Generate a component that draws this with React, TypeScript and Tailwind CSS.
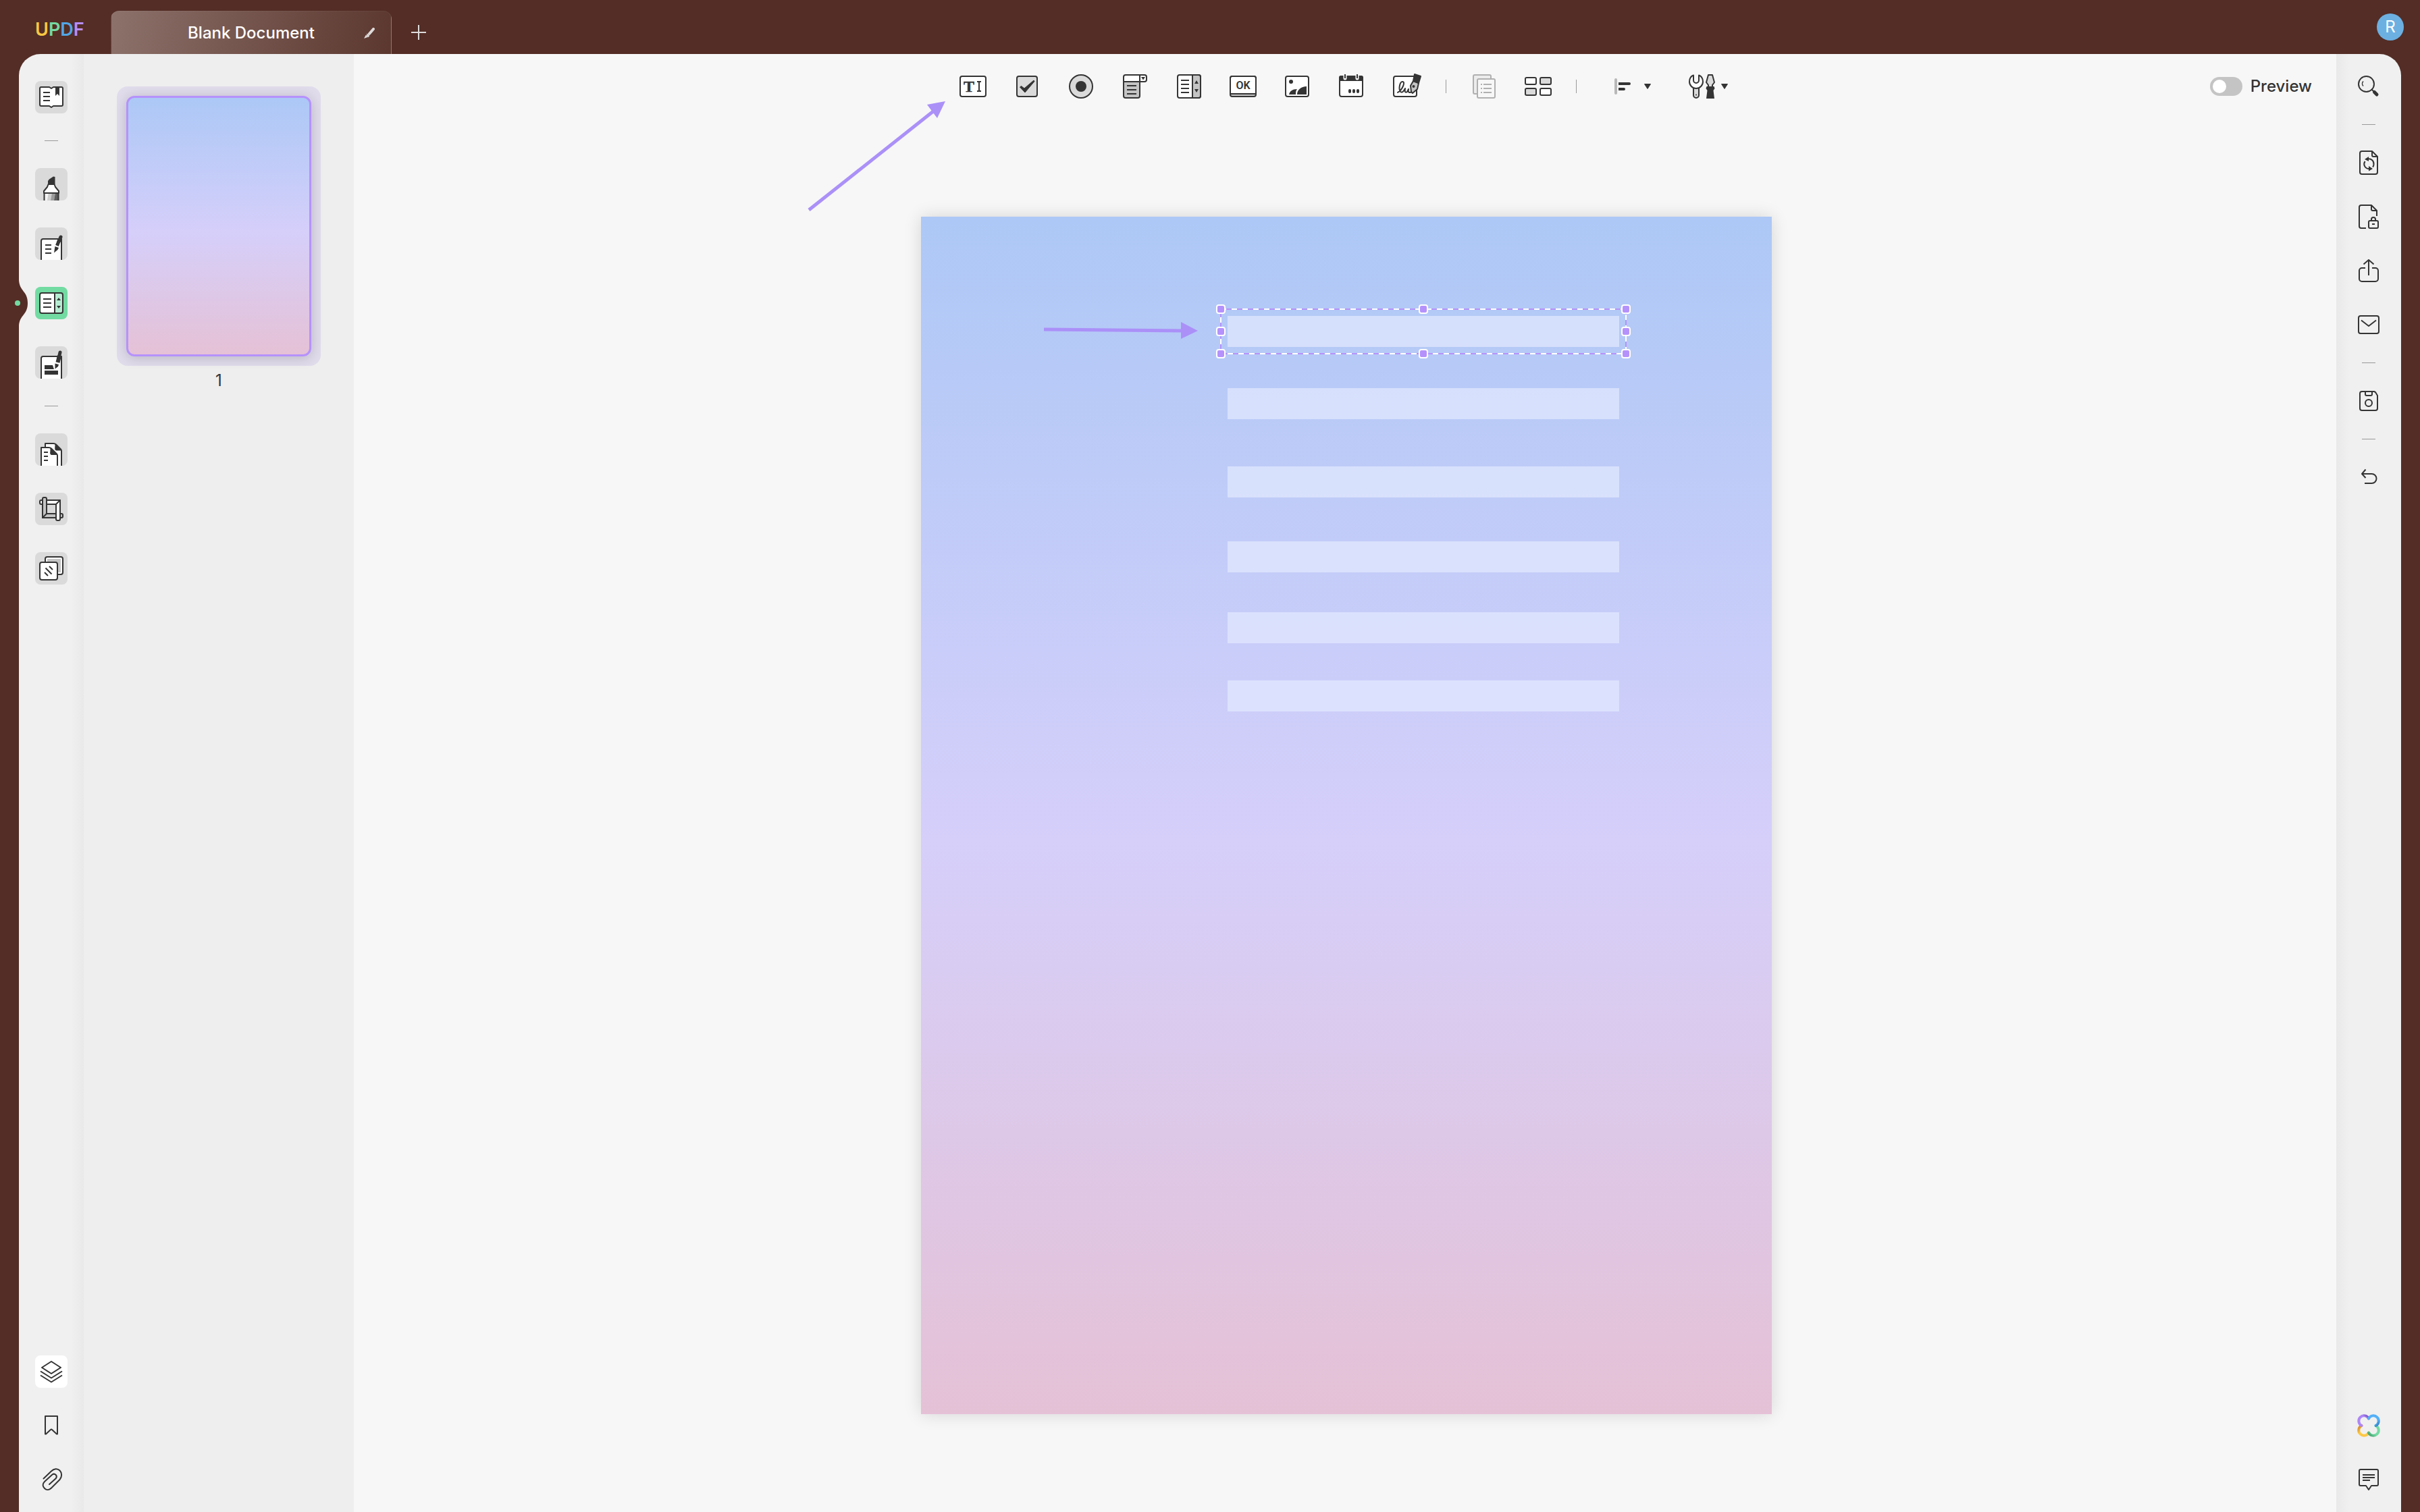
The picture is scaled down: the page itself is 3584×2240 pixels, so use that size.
import { useState, type ReactNode } from 'react'

const INK = '#343434'

function Icon({ children, className = 'size-12' }: { children: ReactNode; className?: string }) {
  return (
    <svg
      viewBox={className === 'size-12' ? '0 0 48 48' : '0 0 40 48'}
      className={className}
      fill="none"
      stroke={INK}
      strokeWidth="2"
      strokeLinejoin="round"
      aria-hidden="true"
    >
      {children}
    </svg>
  )
}

/* ---------- left rail ---------- */

const ReaderIcon = () => (
  <Icon>
    <path fill="#fff" d="M9 9H21l3 2 3-2H39a2 2 0 0 1 2 2V35a2 2 0 0 1-2 2H27l-3 2-3-2H9a2 2 0 0 1-2-2V11a2 2 0 0 1 2-2z" />
    <path fill={INK} stroke="none" d="M30 8h6v14l-3-3-3 3z" />
    <path d="M12 17h10M12 23h10M12 29h10" />
  </Icon>
)

const MarkerIcon = () => (
  <Icon>
    <path fill="#fff" d="M19.500 24h9l1.500 4 5 6v3H13v-3l5-6z" />
    <path fill={INK} stroke="none" d="M19 24v-5l2-2.500 6-4 2.500.500V24z" />
    <path fill="#f3f3f3" stroke="none" d="M13 37h7l-2 11h-5z" />
    <path fill="#cfcfcf" stroke="none" d="M20 37h5l-2 11h-5z" />
    <path fill="#9c9c9c" stroke="none" d="M25 37h5l-2 11h-5z" />
    <path fill="#5e5e5e" stroke="none" d="M30 37h5v11h-7z" />
    <path d="M13.500 48V37h21v11" />
  </Icon>
)

const EditIcon = () => (
  <Icon>
    <path fill="#fff" d="M9 48V20a3 3 0 0 1 3-3h27v31" />
    <path d="M15 26h9M15 32h9M15 38h9" />
    <path strokeWidth="5" strokeLinecap="round" d="M38 14l-3 7" />
    <path strokeWidth="5" d="M36 18l-3.500 9" />
    <path fill={INK} stroke="none" d="M29.500 28l5.500 2-1.500 3-5.500 4.500z" />
  </Icon>
)

const FormIcon = () => (
  <Icon>
    <rect x="7" y="9" width="34" height="30" rx="3" fill="#fff" stroke="none" />
    <path fill="#b5ecd1" stroke="none" d="M29 9h9a3 3 0 0 1 3 3v24a3 3 0 0 1-3 3h-9z" />
    <rect x="7" y="9" width="34" height="30" rx="3" />
    <path d="M29 9v30M12 18h12M12 24h12M12 30h12" />
    <path fill={INK} stroke="none" d="M32 20l3-4 3 4zM32 28l3 4 3-4z" />
  </Icon>
)

const RedactIcon = () => (
  <Icon>
    <path fill="#fff" d="M9 48V18a3 3 0 0 1 3-3h27v33" />
    <path fill={INK} stroke="none" d="M14 28h12l2 6H14zM14 36h20v6H14z" />
    <path strokeWidth="5" strokeLinecap="round" d="M37 9l-2 9" />
    <path strokeWidth="6" d="M36 14l-2.500 10" />
    <path fill={INK} stroke="none" d="M29.500 25.500l5.500 1.500-1 3-4.500 3.500z" />
  </Icon>
)

const OrganizeIcon = () => (
  <Icon>
    <path fill="#fff" stroke="none" d="M15 22v-7h14l10 11v22H15z" />
    <path d="M15 20v-5h12c2 0 3 .500 4 1.500l7 7c.700.700 1 1.500 1 2.500v22" />
    <path fill={INK} strokeWidth="1" d="M30 16.500c0 5-1 8 1 8.500h7.500z" />
    <path fill="#fff" stroke="none" d="M9 48V21h13l11 11v16z" />
    <path d="M9 48V21h11c2 0 3 .500 4 1.500l8 8c.700.700 1 1.500 1 2.500v15" />
    <path fill={INK} strokeWidth="1" d="M23 22.500c0 6-1 8.500 1 9h8z" />
    <path d="M13 28h6M13 34h6M13 40h6" />
  </Icon>
)

const CropIcon = () => (
  <Icon>
    <path fill="#c4c4c4" d="M11 37V31h28a2 2 0 0 1 2 2v2a2 2 0 0 1-2 2z" />
    <path fill="#fff" d="M37 11v6H9a2 2 0 0 1-2-2v-2a2 2 0 0 1 2-2z" />
    <path fill="#c4c4c4" d="M11 37V9a2 2 0 0 1 2-2h2a2 2 0 0 1 2 2v22z" />
    <path fill="#fff" d="M37 11v28a2 2 0 0 1-2 2h-2a2 2 0 0 1-2-2V17z" />
  </Icon>
)

const WatermarkIcon = () => (
  <Icon>
    <rect x="15" y="7" width="26" height="26" rx="3" fill="#fff" />
    <rect x="18" y="10" width="20" height="20" fill="#c4c4c4" stroke="none" />
    <rect x="7" y="15" width="26" height="26" rx="3" fill="#fff" />
    <path d="M15.500 23.500l9 9M21 21l5 5M14 30l5 5" />
  </Icon>
)

const ThumbnailsIcon = () => (
  <Icon>
    <path d="M24 9l14 9-14 9-14-9z" />
    <path d="M8 23.500l16 10 16-10M8 29.500l16 10 16-10" />
  </Icon>
)

const BookmarkIcon = () => (
  <Icon>
    <path d="M15 10h18v26.500h-1L25 30q-1-1-2 0l-7 6.500h-1z" />
  </Icon>
)

const AttachmentIcon = () => (
  <Icon>
    <path
      strokeLinecap="round"
      d="M12.500 22.500L24 11.500C28 7.500 33 7 36.500 10.500S40 20 36.500 24L24 36.500C21 39.500 17 40 14 37S10.500 30.500 14 27L25.500 16.500C29 14 33.500 18 31 22L21 31"
    />
  </Icon>
)

/* ---------- form toolbar ---------- */

const TextFieldIcon = () => (
  <Icon>
    <rect x="5" y="9" width="38" height="30" rx="3" fill="#fff" />
    <text x="10" y="32" fontFamily="Liberation Serif, serif" fontWeight="700" fontSize="24" fill={INK} stroke={INK} strokeWidth="0.5">
      T
    </text>
    <path d="M30 17h6M30 31h6M33 17v14" />
  </Icon>
)

const CheckBoxIcon = () => (
  <Icon>
    <rect x="9" y="9" width="30" height="30" rx="3" fill="#dadada" />
    <path fill={INK} strokeWidth="1" d="M13.500 25l2-1.500 4.500 3.500 14-12 1 1.500L21 33z" />
  </Icon>
)

const RadioIcon = () => (
  <Icon>
    <circle cx="24" cy="24" r="17" fill="#dadada" />
    <circle cx="24" cy="24" r="8" fill={INK} stroke="none" />
  </Icon>
)

const DropdownIcon = () => (
  <Icon>
    <path fill="#c4c4c4" d="M7 17v21a3 3 0 0 0 3 3h18a3 3 0 0 0 3-3V17z" />
    <path fill="#fff" d="M10 7h28a3 3 0 0 1 3 3v4a3 3 0 0 1-3 3H7v-7a3 3 0 0 1 3-3z" />
    <path d="M31 7v10M12 23h14M12 29h14M12 35h14" />
    <path fill={INK} stroke="none" d="M33 10h6l-3 4.500z" />
  </Icon>
)

const ListBoxIcon = () => (
  <Icon>
    <rect x="7" y="7" width="34" height="34" rx="3" fill="#fff" />
    <path fill="#c4c4c4" d="M29 7h9a3 3 0 0 1 3 3v28a3 3 0 0 1-3 3h-9z" />
    <path d="M12 15h12M12 21h12M12 27h12M12 33h12" />
    <path fill={INK} stroke="none" d="M32 20l3-5 3 5zM32 28l3 5 3-5z" />
  </Icon>
)

const ButtonIcon = () => (
  <Icon>
    <rect x="5" y="9" width="38" height="30" rx="3" fill="#c4c4c4" />
    <path fill="#fff" d="M8 9h32a3 3 0 0 1 3 3v23H5V12a3 3 0 0 1 3-3z" />
    <text x="24" y="28" textAnchor="middle" fontFamily="Roboto, sans-serif" fontWeight="600" fontSize="16" fill={INK} stroke="none">
      OK
    </text>
  </Icon>
)

const ImageIcon = () => (
  <Icon>
    <rect x="7" y="9" width="34" height="30" rx="3" fill="#fff" />
    <circle cx="15" cy="17" r="3" fill={INK} stroke="none" />
    <path fill={INK} stroke="none" d="M12 36c1-5 5-8 12-8-2 2-2 5-2 8zM24 36c0-7 6-12 14-12v12z" />
  </Icon>
)

const DateIcon = () => (
  <Icon>
    <rect x="7" y="9" width="34" height="30" rx="3" fill="#fff" />
    <path fill={INK} stroke="none" d="M6 16v-5a3 3 0 0 1 3-3h30a3 3 0 0 1 3 3v5z" />
    <path stroke="#f7f7f7" strokeWidth="5" strokeLinecap="round" d="M15 6v6M33 6v6" />
    <path strokeWidth="2" d="M15 6v6M33 6v6" />
    <path strokeWidth="4" strokeLinecap="round" d="M22 30v2M28 30v2M34 30v2" />
  </Icon>
)

const SignatureIcon = () => (
  <Icon>
    <rect x="7" y="9" width="34" height="30" rx="3" fill="#fff" />
    <path strokeLinecap="round" d="M13 33C20 29 25 17 20 17c-4 0-6 11-3 15 3 2 5-1 7-5-1 5 0 7 3 5l2-4c-1 5 1 6 5 4" />
    <path fill="#c4c4c4" d="M36 16l8 3-2 9-7 6-2-2-1-9z" />
    <path fill={INK} d="M38 6l9 3-3 10-8-3z" />
    <circle cx="36.500" cy="24" r="2" fill={INK} stroke="none" />
  </Icon>
)

const CopyPagesIcon = () => (
  <Icon>
    <g stroke="#b0b0b0">
      <rect x="4" y="7" width="26" height="28" rx="2" fill="#ececec" />
      <rect x="10" y="13" width="26" height="28" rx="2" fill="#f7f7f7" />
      <path d="M15 21h2M19 21h12M15 27h2M19 27h12M15 33h2M19 33h12" />
    </g>
  </Icon>
)

const FieldGridIcon = () => (
  <Icon>
    <rect x="1" y="11" width="16" height="10" rx="2" fill="#fff" />
    <rect x="23" y="11" width="16" height="10" rx="2" fill="#dadada" />
    <rect x="1" y="27" width="16" height="10" rx="2" fill="#dadada" />
    <rect x="23" y="27" width="16" height="10" rx="2" fill="#fff" />
  </Icon>
)

const AlignIcon = () => (
  <Icon className="h-12 w-10">
    <path stroke="#b8b8b8" strokeWidth="4" strokeLinecap="round" d="M6 14v20" />
    <path strokeWidth="4" d="M10 20h16M10 28h8" />
    <path strokeWidth="4" strokeLinecap="round" d="M16 20h10M14 28h4" />
  </Icon>
)

const ToolsIcon = () => (
  <Icon className="h-12 w-10">
    <path fill="#dadada" d="M7 26v11a4 4 0 0 0 8 0V26z" />
    <circle cx="11" cy="36.500" r="1" fill={INK} stroke="none" />
    <path fill="#fff" d="M7 7.500C3 9 1 13 1 17a10 10 0 0 0 20 0c0-4-2-8-6-9.500V15a4 4 0 0 1-8 0z" />
    <path fill="#dadada" d="M29 7h6l3 11-3 4v6h-6v-6l-3-4z" />
    <path fill={INK} stroke="none" d="M26.500 24h11l1 3-2 3 1.500 12H26l1.500-12-2-3z" />
    <path fill="#dadada" stroke="none" d="M30 20h4v4h-4z" />
  </Icon>
)

const Caret = () => (
  <svg viewBox="0 0 12 12" className="size-3" aria-hidden="true">
    <path fill={INK} stroke={INK} strokeLinejoin="round" d="M0.500 2.500h9l-4.500 7z" />
  </svg>
)

/* ---------- right rail ---------- */

const SearchIcon = () => (
  <Icon>
    <circle cx="20.500" cy="20.500" r="11.500" />
    <path strokeWidth="1.500" d="M16 16.500c-2 2-2 5 0 7" />
    <path d="M28 28l4 4" />
    <path strokeWidth="5" strokeLinecap="round" d="M32.500 32.500l3.500 3.500" />
  </Icon>
)

const ConvertIcon = () => (
  <Icon>
    <path d="M14 7h15l8 8v23a3 3 0 0 1-3 3H14a3 3 0 0 1-3-3V10a3 3 0 0 1 3-3z" />
    <path d="M29 7v6a2 2 0 0 0 2 2h6" />
    <path d="M22 18.500c6-1 10 3 9.500 8 0 2-.5 3-1.500 4M18.500 22c-3 5 0 11 6 11" />
    <path fill={INK} stroke="none" d="M18 19l6-4v7zM30 33l-6-4v7.500z" />
  </Icon>
)

const ProtectIcon = () => (
  <Icon>
    <path d="M20 41h-7a3 3 0 0 1-3-3V10a3 3 0 0 1 3-3h15l8 8v8" />
    <path d="M28 7v6a2 2 0 0 0 2 2h6" />
    <rect x="24" y="30" width="14" height="11" rx="2" />
    <path d="M28 30v-2a3 3 0 0 1 6 0v2M29 35h4" />
  </Icon>
)

const ShareIcon = () => (
  <Icon>
    <path d="M19 20h-5a4 4 0 0 0-4 4v12a4 4 0 0 0 4 4h20a4 4 0 0 0 4-4V24a4 4 0 0 0-4-4h-5M24 8v23M16.500 14.500L24 8l7.500 6.500" />
  </Icon>
)

const MailIcon = () => (
  <Icon>
    <rect x="9" y="11" width="30" height="26" rx="3" />
    <path d="M13 17.500l11 8.500 11-8.500" />
  </Icon>
)

const SaveIcon = () => (
  <Icon>
    <path d="M14 10h18l2 1 3 5v19a3 3 0 0 1-3 3H14a3 3 0 0 1-3-3V13a3 3 0 0 1 3-3z" />
    <path d="M19 10v4a2 2 0 0 0 2 2h6a2 2 0 0 0 2-2v-4" />
    <circle cx="24" cy="27" r="5" />
  </Icon>
)

const UndoIcon = () => (
  <Icon>
    <path d="M19.500 12.500L14 19l5.500 6M14 19h14.500a7 7 0 0 1 0 14H18" />
  </Icon>
)

const AssistantIcon = () => (
  <Icon>
    <defs>
      <linearGradient id="petalPurple" x1="0" y1="1" x2="1" y2="0">
        <stop offset="0.700" stopColor="#ae86f6" />
        <stop offset="1" stopColor="#6f4bb8" />
      </linearGradient>
      <linearGradient id="petalBlue" x1="0" y1="0" x2="1" y2="1">
        <stop offset="0.700" stopColor="#54b0f8" />
        <stop offset="1" stopColor="#2b7cc4" />
      </linearGradient>
      <linearGradient id="petalGreen" x1="1" y1="0" x2="0" y2="1">
        <stop offset="0.600" stopColor="#72dba2" />
        <stop offset="1" stopColor="#3f9b6b" />
      </linearGradient>
      <linearGradient id="petalYellow" x1="1" y1="1" x2="0" y2="0">
        <stop offset="0.600" stopColor="#fcc844" />
        <stop offset="1" stopColor="#cf8226" />
      </linearGradient>
    </defs>
    <g strokeWidth="4" strokeLinecap="round">
      <path stroke="url(#petalYellow)" d="M24 34.500A7.800 7.800 0 1 1 13.500 24" />
      <path stroke="url(#petalGreen)" d="M34.500 24A7.800 7.800 0 1 1 24 34.500" />
      <path stroke="url(#petalPurple)" d="M13.500 24A7.800 7.800 0 1 1 24 13.500" />
      <path stroke="url(#petalBlue)" d="M24 13.500A7.800 7.800 0 1 1 34.500 24" />
    </g>
  </Icon>
)

const CommentIcon = () => (
  <Icon>
    <path d="M12 9h24a2 2 0 0 1 2 2v20a2 2 0 0 1-2 2h-8l-4 6-4-6h-8a2 2 0 0 1-2-2V11a2 2 0 0 1 2-2z" />
    <path d="M15 17h18M15 21h18M15 25h11" />
  </Icon>
)

/* ---------- layout ---------- */

function IconButton({ label, className = '', children }: { label: string; className?: string; children: ReactNode }) {
  return (
    <button type="button" aria-label={label} className={`relative size-12 shrink-0 rounded-lg ${className}`}>
      {children}
    </button>
  )
}

const Dash = () => <span className="h-px w-5 shrink-0 bg-[#999]" />

function TitleBar() {
  return (
    <header className="flex h-20 shrink-0 items-end pr-6">
      <div className="flex h-20 w-[164px] shrink-0 items-center pt-2 pl-[52px] text-[27px] leading-8 font-semibold">
        <span className="text-[#f7c843]">U</span>
        <span className="text-[#74d9a2]">P</span>
        <span className="text-[#52a6e4]">D</span>
        <span className="text-[#b78dfa]">F</span>
      </div>
      <div className="grid h-16 w-[416px] grid-cols-[64px_1fr_64px] items-center rounded-t-xl border border-b-0 border-white/5 bg-linear-100 from-[#8c726b] to-[#5b372f] text-white">
        <span />
        <span className="text-center text-2xl font-medium whitespace-nowrap">Blank Document</span>
        <button type="button" aria-label="Rename" className="justify-self-center">
          <svg viewBox="0 0 16 16" className="size-4" fill="#dedbda" aria-hidden="true">
            <path stroke="#dedbda" strokeWidth="4" strokeLinecap="round" d="M14 2L8 9" />
            <path d="M4.500 8.500l4 3.500-2.500 2.500-2-3zM3 10.500l2.500 3.500L0 16z" />
          </svg>
        </button>
      </div>
      <button type="button" aria-label="New tab" className="flex h-16 w-20 items-center justify-center">
        <svg viewBox="0 0 22 22" className="size-[22px]" stroke="#dedbda" strokeWidth="2" aria-hidden="true">
          <path d="M0 11h22M11 0v22" />
        </svg>
      </button>
      <button type="button" className="mb-5 ml-auto size-10 rounded-full bg-[#6cb0e1] text-2xl text-white">
        R
      </button>
    </header>
  )
}

function LeftRail() {
  return (
    <nav className="flex w-24 shrink-0 flex-col items-center gap-10 rounded-tl-[32px] bg-linear-to-r from-[#f0f0f0] from-80% to-[#e9e9e9] pt-10 pb-6">
      <IconButton label="Reader" className="bg-[#dadada]"><ReaderIcon /></IconButton>
      <Dash />
      <IconButton label="Comment" className="bg-[#dadada]"><MarkerIcon /></IconButton>
      <IconButton label="Edit" className="bg-[#dadada]"><EditIcon /></IconButton>
      <IconButton label="Form" className="bg-[#72dba2]">
        <FormIcon />
        <svg viewBox="0 0 20 68" className="absolute -top-2.5 -left-[31px] h-[68px] w-5" aria-hidden="true">
          <path fill="#532d26" d="M6 0h1C8 17 20 16 20 34S8 51 7 68H6z" />
          <circle cx="5" cy="34" r="4" fill="#72dba2" />
        </svg>
      </IconButton>
      <IconButton label="Redact" className="bg-[#dadada]"><RedactIcon /></IconButton>
      <Dash />
      <IconButton label="Organize pages" className="bg-[#dadada]"><OrganizeIcon /></IconButton>
      <IconButton label="Crop pages" className="bg-[#dadada]"><CropIcon /></IconButton>
      <IconButton label="Watermark" className="bg-[#dadada]"><WatermarkIcon /></IconButton>
      <div className="mt-auto flex flex-col gap-8">
        <IconButton label="Thumbnails" className="bg-white"><ThumbnailsIcon /></IconButton>
        <IconButton label="Bookmarks"><BookmarkIcon /></IconButton>
        <IconButton label="Attachments"><AttachmentIcon /></IconButton>
      </div>
    </nav>
  )
}

function Thumbnails() {
  return (
    <aside className="flex w-[400px] shrink-0 flex-col items-center bg-[#eee] pt-12">
      <button type="button" aria-label="Page 1" className="rounded-2xl bg-[#e1dcec] p-3.5">
        <span className="block h-[386px] w-[274px] rounded-xl border-3 border-[#b592fb] bg-linear-to-b from-[#acc8f6] via-[#d5cffa] via-52% to-[#e5c1d6] shadow-[0_2px_18px_rgba(0,0,0,0.18)]" />
      </button>
      <span className="mt-1.5 text-2xl text-[#343434]">1</span>
    </aside>
  )
}

const fieldTools = [
  { label: 'Text field', icon: <TextFieldIcon /> },
  { label: 'Check box', icon: <CheckBoxIcon /> },
  { label: 'Radio button', icon: <RadioIcon /> },
  { label: 'Dropdown', icon: <DropdownIcon /> },
  { label: 'List box', icon: <ListBoxIcon /> },
  { label: 'Push button', icon: <ButtonIcon /> },
  { label: 'Image', icon: <ImageIcon /> },
  { label: 'Date', icon: <DateIcon /> },
  { label: 'Signature', icon: <SignatureIcon /> },
]

function Toolbar() {
  const [preview, setPreview] = useState(false)

  return (
    <div className="grid h-24 grid-cols-[1fr_auto_1fr] items-center">
      <span />
      <div className="flex items-center">
        <div className="flex gap-8">
          {fieldTools.map((tool) => (
            <IconButton key={tool.label} label={tool.label}>{tool.icon}</IconButton>
          ))}
        </div>
        <span className="mx-9 h-5 w-px bg-[#999]" />
        <div className="flex gap-8">
          <IconButton label="Duplicate across pages"><CopyPagesIcon /></IconButton>
          <IconButton label="Create multiple copies"><FieldGridIcon /></IconButton>
        </div>
        <span className="mr-13 ml-7 h-5 w-px bg-[#999]" />
        <div className="flex gap-[54px] pr-1.5">
          <button type="button" aria-label="Align" className="flex items-center gap-2"><AlignIcon /><Caret /></button>
          <button type="button" aria-label="More tools" className="flex items-center gap-2"><ToolsIcon /><Caret /></button>
        </div>
      </div>
      <label className="flex items-center gap-3 justify-self-end pr-9 text-2xl font-medium text-[#343434]">
        <input
          type="checkbox"
          role="switch"
          checked={preview}
          onChange={(e) => setPreview(e.target.checked)}
          className="h-7 w-12 appearance-none rounded-full bg-[#c4c4c4] p-1 before:block before:size-5 before:rounded-full before:bg-white checked:bg-[#b592fb] checked:before:ml-auto"
        />
        Preview
      </label>
    </div>
  )
}

const handles = [
  'left-0 top-0',
  'left-1/2 top-0',
  'left-full top-0',
  'left-0 top-1/2',
  'left-full top-1/2',
  'left-0 top-full',
  'left-1/2 top-full',
  'left-full top-full',
]

function Selection() {
  return (
    <div className="pointer-events-none absolute -inset-2.5">
      <svg className="absolute size-full overflow-visible" fill="none" aria-hidden="true">
        <rect width="100%" height="100%" stroke="#b592fb" strokeWidth="2" />
        <rect width="100%" height="100%" stroke="#fff" strokeWidth="2" strokeDasharray="8 8" />
      </svg>
      {handles.map((pos) => (
        <span key={pos} className={`absolute size-3.5 -translate-1/2 rounded-sm border-2 border-white bg-[#b592fb] ${pos}`} />
      ))}
    </div>
  )
}

const fields = ['mt-[147px]', 'mt-[61px]', 'mt-[70px]', 'mt-[65px]', 'mt-[59px]', 'mt-[55px]']

function DocumentPage() {
  return (
    <div className="flex justify-center pt-[145px] pb-36 pl-1">
      <div className="relative h-[1774px] w-[1260px] bg-linear-to-b from-[#adc8f6] via-[#d5cffa] via-52% to-[#e5c1d6] shadow-[0_0_24px_rgba(0,0,0,0.14)]">
        <div className="flex w-[1034px] flex-col pl-[454px]">
          {fields.map((margin, i) => (
            <div key={i} className={`relative h-[46px] ${margin}`}>
              <input type="text" aria-label={`Text field ${i + 1}`} className="block size-full bg-[#e2e9fd]/72 px-3 text-2xl outline-none" />
              {i === 0 && <Selection />}
            </div>
          ))}
        </div>

        {/* callout arrows */}
        <svg viewBox="0 0 210 170" className="absolute -top-[175px] -left-[170px] h-[170px] w-[210px]" fill="#ab90f8" aria-hidden="true">
          <path stroke="#ab90f8" strokeWidth="5" d="M4 165L188 19" />
          <path d="M206 4l-12 25-15-20z" />
        </svg>
        <svg viewBox="0 0 232 30" className="absolute top-[153px] left-[180px] h-[30px] w-[232px]" fill="#ab90f8" aria-hidden="true">
          <path stroke="#ab90f8" strokeWidth="5" d="M2 14l206 2" />
          <path d="M230 16l-25 12V3z" />
        </svg>
      </div>
    </div>
  )
}

function RightRail() {
  return (
    <nav className="flex w-24 shrink-0 flex-col items-center gap-8 rounded-tr-[32px] bg-linear-to-r from-[#e9e9e9] to-[#f0f0f0] to-20% pt-6 pb-6">
      <IconButton label="Search"><SearchIcon /></IconButton>
      <Dash />
      <IconButton label="Convert"><ConvertIcon /></IconButton>
      <IconButton label="Protect"><ProtectIcon /></IconButton>
      <IconButton label="Share"><ShareIcon /></IconButton>
      <IconButton label="Email"><MailIcon /></IconButton>
      <Dash />
      <IconButton label="Save"><SaveIcon /></IconButton>
      <Dash />
      <IconButton label="Undo"><UndoIcon /></IconButton>
      <div className="mt-auto flex flex-col gap-8">
        <IconButton label="Assistant"><AssistantIcon /></IconButton>
        <IconButton label="Comments"><CommentIcon /></IconButton>
      </div>
    </nav>
  )
}

export default function App() {
  return (
    <div className="flex min-h-screen flex-col bg-[#532d26] font-['Inter',sans-serif]">
      <TitleBar />
      <div className="flex grow px-7">
        <LeftRail />
        <Thumbnails />
        <main className="min-w-0 grow bg-[#f7f7f7]">
          <Toolbar />
          <DocumentPage />
        </main>
        <RightRail />
      </div>
    </div>
  )
}
